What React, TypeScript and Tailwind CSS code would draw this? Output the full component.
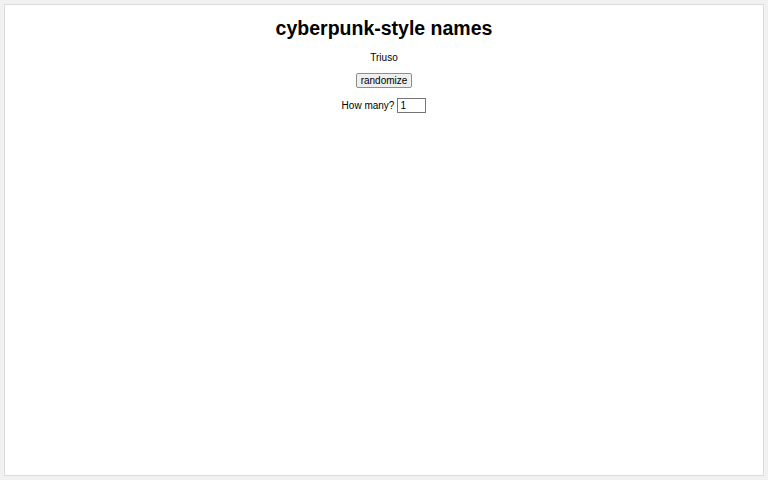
import React from "react";

export default function App() {
  return (
    <div className="h-[480px] w-[768px] bg-[#f1f1f1] p-[4px]" style={{ fontFamily: '"Liberation Sans", Arial, sans-serif' }}>
      <div className="h-[472px] border border-[#dcdcdc] bg-white flex flex-col items-center">
        <h1 className="mt-[11px] text-[19.5px] font-bold leading-[24px] text-black">cyberpunk-style names</h1>
        <p className="mt-[12px] text-[10px] leading-[12px] text-black">Triuso</p>
        <button className="mt-[9px] h-[15px] px-[4px] text-[10px] leading-[12px] text-black bg-[#efefef] border border-[#8f8f8f] rounded-[2px]">randomize</button>
        <div className="mt-[10px] flex items-center h-[15px] text-[10px] text-black">
          <span>How many?</span>
          <input defaultValue="1" className="ml-[3px] w-[29px] h-[15px] px-[2px] text-[10px] border border-[#767676] bg-white outline-none" />
        </div>
      </div>
    </div>
  );
}
